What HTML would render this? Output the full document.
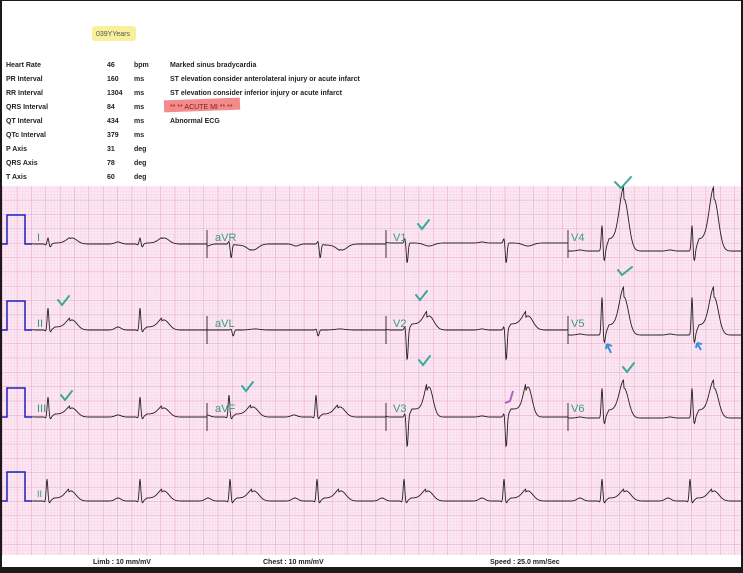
<!DOCTYPE html>
<html><head><meta charset="utf-8"><style>
html,body{margin:0;padding:0;background:#1a1a1a;}
#w{position:absolute;left:2px;top:1px;width:739px;height:566px;background:#fff;overflow:hidden;font-family:"Liberation Sans",sans-serif;}
.t{position:absolute;font-size:7px;font-weight:bold;color:#222;white-space:nowrap;}
</style></head><body>
<div id="w">
<div style="position:absolute;left:90px;top:25px;width:44px;height:15px;background:#f8f09a;border-radius:3px"></div>
<div class="t" style="left:94px;top:30px;font-weight:normal;color:#555">039YYears</div>
<div style="position:absolute;left:162px;top:98px;width:76px;height:12px;background:#f48a8a;transform:rotate(-2deg)"></div>
</div>
<svg id="s" width="743" height="573" style="position:absolute;left:0;top:0">
<defs>
<pattern id="mn" width="2.87" height="2.87" patternUnits="userSpaceOnUse" x="3" y="186"><path d="M2.87 0V2.87H0" fill="none" stroke="#f4c4e0" stroke-width="0.5"/></pattern>
<pattern id="mj" width="14.35" height="14.35" patternUnits="userSpaceOnUse" x="3" y="186"><path d="M14.35 0V14.35H0" fill="none" stroke="#e294c4" stroke-width="0.8"/></pattern>
</defs>
<rect x="2" y="186" width="739" height="369" fill="#fce8f3"/>
<rect x="2" y="186" width="739" height="369" fill="url(#mn)"/>
<rect x="2" y="186" width="739" height="369" fill="url(#mj)"/>
<g id="tr" fill="none" stroke="#222" stroke-width="0.9"></g>
<g fill="none" stroke="#2020c0" stroke-width="1.5">
<path d="M2 244H7V215H25V244H32"/><path d="M2 330H7V301H25V330H32"/><path d="M2 417H7V388H25V417H32"/><path d="M2 501H7V472H25V501H32"/>
</g>
<g fill="#3a9a7a" font-family="Liberation Sans,sans-serif" font-size="11">
<text x="37" y="241">I</text><text x="37" y="327">II</text><text x="37" y="412">III</text><text x="37" y="497" font-size="9">II</text>
<text x="215" y="241">aVR</text><text x="215" y="327">aVL</text><text x="215" y="412">aVF</text>
<text x="393" y="241">V1</text><text x="393" y="327">V2</text><text x="393" y="412">V3</text>
<text x="571" y="241">V4</text><text x="571" y="327">V5</text><text x="571" y="412">V6</text>
</g>
<g fill="none" stroke="#3aa89a" stroke-width="2" stroke-linecap="round">
<path d="M58 300l4 5l7-9"/><path d="M61 395l4 5l7-9"/><path d="M242 386l4 5l7-9"/>
<path d="M418 224l4 5l7-9"/><path d="M416 295l4 5l7-9"/><path d="M419 360l4 5l7-9"/>
<path d="M615 182l6 6l10-11"/><path d="M618 270l4 5l10-8"/><path d="M623 367l4 5l7-9"/>
</g>
<path d="M505 403l5-2l3-10" fill="none" stroke="#b060c0" stroke-width="2"/>
<g fill="none" stroke="#3a8ee0" stroke-width="2"><path d="M611 353l-4-9m0 0l5 2m-5-2l-1 5"/><path d="M701 350l-4-7m0 0l5 1m-5-1l-1 5"/></g>
<g font-family="Liberation Sans,sans-serif" font-size="7" font-weight="bold" fill="#222">
<text x="6" y="67">Heart Rate</text><text x="107" y="67">46</text><text x="134" y="67">bpm</text><text x="170" y="67">Marked sinus bradycardia</text>
<text x="6" y="81">PR Interval</text><text x="107" y="81">160</text><text x="134" y="81">ms</text><text x="170" y="81">ST elevation consider anterolateral injury or acute infarct</text>
<text x="6" y="95">RR Interval</text><text x="107" y="95">1304</text><text x="134" y="95">ms</text><text x="170" y="95">ST elevation consider inferior injury or acute infarct</text>
<text x="6" y="109">QRS Interval</text><text x="107" y="109">84</text><text x="134" y="109">ms</text><text x="170" y="109" fill="#802020" font-weight="normal">** ** ACUTE MI ** **</text>
<text x="6" y="123">QT Interval</text><text x="107" y="123">434</text><text x="134" y="123">ms</text><text x="170" y="123">Abnormal ECG</text>
<text x="6" y="137">QTc Interval</text><text x="107" y="137">379</text><text x="134" y="137">ms</text>
<text x="6" y="151">P Axis</text><text x="107" y="151">31</text><text x="134" y="151">deg</text>
<text x="6" y="165">QRS Axis</text><text x="107" y="165">78</text><text x="134" y="165">deg</text>
<text x="6" y="179">T Axis</text><text x="107" y="179">60</text><text x="134" y="179">deg</text>
<text x="93" y="564">Limb : 10 mm/mV</text><text x="263" y="564">Chest : 10 mm/mV</text><text x="490" y="564">Speed : 25.0 mm/Sec</text>
</g>
<rect x="0" y="567" width="743" height="6" fill="#1a1a1a"/>
</svg>
<script>
function g(x,c,w,a){var d=(x-c)/w;return a*Math.exp(-d*d/2);}
function lead(x0,x1,by,beats,p){var pts=[];for(var x=x0;x<=x1;x+=0.5){var v=0;for(var i=0;i<beats.length;i++){var t=x-beats[i];if(t<-40||t>60)continue;
v+=g(t,-22,3,p.p)+g(t,-2.2,0.8,-p.q)+g(t,0,0.8,p.r)+g(t,2.2,0.9,-p.s)+g(t,p.tc||24,p.tw||5,p.t);
if(t>3&&t<22)v+=p.st*Math.min(1,(t-3)/4);}
pts.push(x.toFixed(1)+','+(by-v).toFixed(1));}
var e=document.createElementNS('http://www.w3.org/2000/svg','polyline');e.setAttribute('points',pts.join(' '));document.getElementById('tr').appendChild(e);}
var L={
I:{p:2,q:1,r:6,s:3,t:6,st:1},II:{p:3,q:1,r:22,s:2,t:10,st:3},III:{p:2,q:1,r:20,s:2,t:9,st:3},
aVR:{p:-2,q:0,r:3,s:14,t:-6,st:-1},aVL:{p:0,q:0,r:1,s:6,t:1,st:0},aVF:{p:2,q:1,r:22,s:2,t:10,st:3},
V1:{p:1,q:0,r:5,s:20,t:-3,st:0},V2:{p:1,q:0,r:4,s:30,t:14,st:6},V3:{p:1,q:0,r:4,s:30,t:30,st:8,tw:4},
V4:{p:1,q:0,r:26,s:10,t:52,st:12,tw:4.5,tc:22},V5:{p:1,q:0,r:38,s:8,t:38,st:10,tw:4.5,tc:22},V6:{p:1,q:0,r:30,s:6,t:30,st:8,tw:4.5,tc:22}};
lead(32,207,244,[48,140],L.I);lead(32,207,330,[48,140],L.II);lead(32,207,417,[48,140],L.III);
lead(207,386,244,[229,318],L.aVR);lead(207,386,330,[231,316],L.aVL);lead(207,386,417,[229,316],L.aVF);
lead(386,568,243,[405,504],L.V1);lead(386,568,330,[405,504],L.V2);lead(386,568,417,[405,504],L.V3);
lead(568,741,251,[602,692],L.V4);lead(568,741,335,[602,692],L.V5);lead(568,741,418,[602,692],L.V6);
lead(32,741,501,[47,140,230,317,404,504,602,690],L.II);
var tr=document.getElementById('tr');
[[207,230,258],[207,316,344],[207,403,431],[386,230,258],[386,316,344],[386,403,431],[568,230,258],[568,316,344],[568,403,431]].forEach(function(a){var l=document.createElementNS('http://www.w3.org/2000/svg','line');l.setAttribute('x1',a[0]);l.setAttribute('x2',a[0]);l.setAttribute('y1',a[1]);l.setAttribute('y2',a[2]);tr.appendChild(l);});
</script>
</body></html>
